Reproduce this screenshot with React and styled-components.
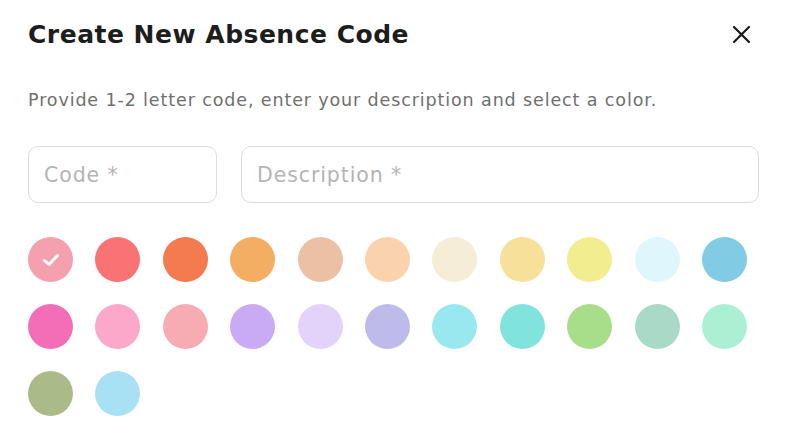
import React, { useState } from "react";
import styled, { createGlobalStyle } from "styled-components";

const GlobalStyle = createGlobalStyle`
  html, body {
    margin: 0;
    padding: 0;
    background: #ffffff;
  }
  body {
    font-family: "DejaVu Sans", "Open Sans", sans-serif;
  }
`;

const Dialog = styled.div`
  width: 786px;
  height: 430px;
  box-sizing: border-box;
  padding: 16px 27px 0 28px;
  background: #fff;
`;

const Header = styled.div`
  display: flex;
  align-items: center;
  justify-content: space-between;
  height: 36px;
`;

const Title = styled.h2`
  margin: 0;
  font-size: 25px;
  font-weight: 600;
  letter-spacing: 0.5px;
  color: #1d1d1d;
`;

const CloseButton = styled.button`
  border: none;
  background: none;
  padding: 0;
  margin-right: 7px;
  width: 22px;
  height: 22px;
  display: flex;
  align-items: center;
  justify-content: center;
  cursor: pointer;
`;

const Hint = styled.p`
  margin: 38px 0 0;
  font-size: 17.5px;
  line-height: 21px;
  letter-spacing: 0.88px;
  color: #6f6f6f;
`;

const Fields = styled.div`
  display: flex;
  gap: 24px;
  margin-top: 35px;
`;

const Input = styled.input`
  box-sizing: border-box;
  height: 57px;
  width: ${(p) => p.$w};
  flex: ${(p) => (p.$grow ? 1 : "none")};
  border: 1.5px solid #dcdcdc;
  border-radius: 10px;
  padding: 0 15px;
  font-family: inherit;
  font-size: 20.5px;
  letter-spacing: 0.9px;
  color: #333;
  outline: none;
  &::placeholder {
    color: #b4b4b4;
  }
`;

const Swatches = styled.div`
  display: flex;
  flex-wrap: wrap;
  column-gap: 22.4px;
  row-gap: 22px;
  width: 720px;
  margin-top: 34px;
`;

const Swatch = styled.button`
  width: 45px;
  height: 45px;
  border-radius: 50%;
  border: none;
  padding: 0;
  background: ${(p) => p.$color};
  display: flex;
  align-items: center;
  justify-content: center;
  cursor: pointer;
`;

const colors = [
  "#F4A0AE", "#F97274", "#F47B4F", "#F3AE63", "#ECC0A4", "#FAD2AE",
  "#F5EDD6", "#F7E09A", "#F2EE90", "#DFF6FC", "#82CBE4",
  "#F46DB7", "#FBA8CA", "#F7ACB4", "#C9ABF3", "#E3D3FA", "#BEBBEA",
  "#9AE8EF", "#80E3DC", "#A8DE8A", "#AAD9C8", "#ACF0D4",
  "#AABB88", "#A9E1F4",
];

export default function App() {
  const [selected, setSelected] = useState(0);
  return (
    <>
      <GlobalStyle />
      <Dialog>
        <Header>
          <Title>Create New Absence Code</Title>
          <CloseButton aria-label="Close">
            <svg width="19" height="19" viewBox="0 0 19 19">
              <path d="M2 2 L17 17 M17 2 L2 17" stroke="#1a1a1a" strokeWidth="2.2" strokeLinecap="round" />
            </svg>
          </CloseButton>
        </Header>
        <Hint>Provide 1-2 letter code, enter your description and select a color.</Hint>
        <Fields>
          <Input $w="189px" placeholder="Code *" />
          <Input $grow placeholder="Description *" />
        </Fields>
        <Swatches>
          {colors.map((c, i) => (
            <Swatch key={i} $color={c} onClick={() => setSelected(i)}>
              {selected === i && (
                <svg width="20" height="20" viewBox="0 0 20 20">
                  <path d="M3.5 10.5 L8 14.5 L16.5 5.5" fill="none" stroke="#fff" strokeWidth="3" strokeLinecap="round" strokeLinejoin="round" />
                </svg>
              )}
            </Swatch>
          ))}
        </Swatches>
      </Dialog>
    </>
  );
}
